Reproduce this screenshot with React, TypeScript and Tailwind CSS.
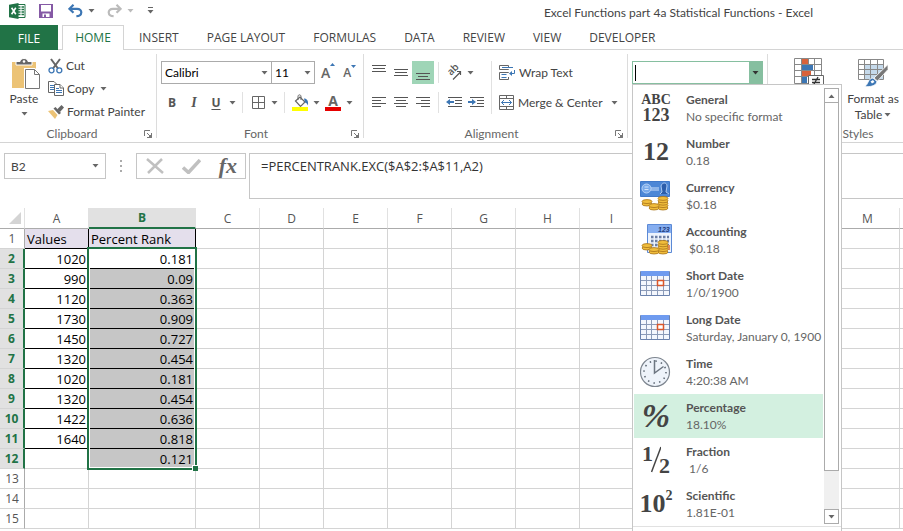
import type { ReactNode } from 'react';

const tabs = ['INSERT', 'PAGE LAYOUT', 'FORMULAS', 'DATA', 'REVIEW', 'VIEW', 'DEVELOPER'];

const columns = ['A', 'B', 'C', 'D', 'E', 'F', 'G', 'H', 'I', 'J', 'K', 'L', 'M', 'N'];

const rows = [
  ['Values', 'Percent Rank'],
  ['1020', '0.181'],
  ['990', '0.09'],
  ['1120', '0.363'],
  ['1730', '0.909'],
  ['1450', '0.727'],
  ['1320', '0.454'],
  ['1020', '0.181'],
  ['1320', '0.454'],
  ['1422', '0.636'],
  ['1640', '0.818'],
  ['', '0.121'],
  ['', ''],
  ['', ''],
  ['', ''],
];

const Caret = ({ className = 'text-[#666]' }: { className?: string }) => (
  <svg width="7" height="4" viewBox="0 0 7 4" className={`shrink-0 ${className}`} aria-hidden="true">
    <path d="M0.5 0h6L3.5 3.6z" fill="currentColor" />
  </svg>
);

const CaretButton = ({ label }: { label: string }) => (
  <button aria-label={label} className="flex h-[22px] w-[11px] items-center justify-center">
    <Caret />
  </button>
);

const IconButton = ({ label, active, children }: { label: string; active?: boolean; children: ReactNode }) => (
  <button
    aria-label={label}
    className={`flex h-[23px] w-[22px] items-center justify-center ${active ? 'bg-[#9fd5b7]' : ''}`}
  >
    {children}
  </button>
);

const Separator = () => <div className="mx-1 h-[21px] w-px bg-[#e1e1e1]" />;

// Horizontal strokes given as [x, y, width]
const Lines = ({ lines, children }: { lines: number[][]; children?: ReactNode }) => (
  <svg width="16" height="16" viewBox="0 0 16 16" shapeRendering="crispEdges" aria-hidden="true">
    {lines.map(([x, y, w]) => (
      <rect key={`${x}-${y}`} x={x} y={y} width={w} height="1" fill="#555" />
    ))}
    {children}
  </svg>
);

const Group = ({ name, className, launcher = true, children }: { name: string; className: string; launcher?: boolean; children: ReactNode }) => (
  <section aria-label={name} className={`flex shrink-0 flex-col ${className}`}>
    <div className="flex-1">{children}</div>
    <div className="flex h-4 items-center pr-1">
      <span className="flex-1 text-center text-[#666]">{name}</span>
      {launcher && (
        <button aria-label={`${name} settings`}>
          <svg width="8" height="8" viewBox="0 0 8 8" fill="none" stroke="#777" aria-hidden="true">
            <path d="M0.5 6V0.5H6M3 3l3.5 3.5M7.5 3v4.5H3" />
            <path d="M7.5 4.5v3h-3z" fill="#777" />
          </svg>
        </button>
      )}
    </div>
  </section>
);

const GroupDivider = () => <div className="mb-1 w-px shrink-0 bg-[#dcdcdc]" />;

const ExcelLogo = () => (
  <svg width="17" height="16" viewBox="0 0 17 16" aria-hidden="true">
    <path d="M8 1.5h8v13H8z" fill="#fff" stroke="#217346" />
    <path d="M9 4h2.5M12.5 4H15M9 6.5h2.5M12.5 6.5H15M9 9h2.5M12.5 9H15M9 11.5h2.5M12.5 11.5H15" stroke="#217346" strokeWidth="1.4" />
    <path d="M0 1.8L9.5 0v16L0 14.2z" fill="#217346" />
    <path d="M2.6 4.8l4.2 6.4M6.8 4.8l-4.2 6.4" stroke="#fff" strokeWidth="1.6" />
  </svg>
);

const SaveIcon = () => (
  <svg width="14" height="14" viewBox="0 0 14 14" aria-hidden="true">
    <path d="M0 0h14v14H0z" fill="#8559a5" />
    <path d="M2 1h10v6.5H2zM3.5 9.5h7V13h-7z" fill="#fff" />
    <path d="M5 10.5h2V13H5z" fill="#8559a5" />
  </svg>
);

const UndoIcon = () => (
  <svg width="15" height="14" viewBox="0 0 15 14" fill="none" stroke="currentColor" strokeWidth="2.2" aria-hidden="true">
    <path d="M5.5 0.8L1.4 4.8l4.1 4M1.8 4.8h7.2c6 0 5.6 7.4-0.6 7.4" />
  </svg>
);

const PasteIcon = () => (
  <svg width="30" height="32" viewBox="0 0 30 32" aria-hidden="true">
    <path d="M1 4h24v26H1z" fill="#ecc376" />
    <path d="M5 7V3.5h4C9.500-0.500 16.500-0.500 17 3.500h4V7z" fill="#666" stroke="#fff" />
    <circle cx="13" cy="3.5" r="1.3" fill="#fff" />
    <path d="M13 10h11l6 6v16H13z" fill="#fff" />
    <path d="M14.5 11.5h9l5 5v14h-14z" fill="#fff" stroke="#777" />
    <path d="M23.5 11.5v5h5" fill="none" stroke="#777" />
  </svg>
);

const CutIcon = () => (
  <svg width="15" height="16" viewBox="0 0 15 16" fill="none" aria-hidden="true">
    <path d="M3 1l7 9.5M12 1L5 10.5" stroke="#666" strokeWidth="2" />
    <circle cx="3.5" cy="12.3" r="2.5" stroke="#3c76b4" strokeWidth="1.3" />
    <circle cx="11.3" cy="12.3" r="2.5" stroke="#3c76b4" strokeWidth="1.3" />
  </svg>
);

const CopyIcon = () => (
  <svg width="16" height="15" viewBox="0 0 16 15" fill="#fff" stroke="#666" aria-hidden="true">
    <path d="M0.5 0.5H6L8.5 3v8.5h-8z" />
    <path d="M2 4.5h4M2 6.5h4M2 8.5h4" stroke="#3c76b4" />
    <path d="M6.5 3.5H12L15.5 7v7.5h-9z" />
    <path d="M12 3.5V7h3.5" />
    <path d="M8 7.5h3M8 9.5h6M8 11.5h6" stroke="#3c76b4" />
  </svg>
);

const PainterIcon = () => (
  <svg width="16" height="14" viewBox="0 0 16 14" aria-hidden="true">
    <path d="M0 6l5-1 4.500 5L7 14z" fill="#ecc376" />
    <path d="M5.500 3.500l2-1.500 5.500 6-2 1.500z" fill="#666" />
    <path d="M9 4.500l4.500-4.500L16 2.500 12 7z" fill="#666" />
  </svg>
);

const BucketIcon = () => (
  <svg width="17" height="17" viewBox="0 0 17 17" fill="none" aria-hidden="true">
    <path d="M3.5 7L8 3l5 5-4.5 4.5z" fill="#fff" stroke="#666" strokeWidth="1.2" />
    <path d="M6 6V2.5c0-2.2 3-2.2 3 0V6" stroke="#666" />
    <path d="M12 4.5c3 0 4.5 2 4 7-1-2-2-3-3-3z" fill="#3c76b4" />
    <path d="M0 13h16v4H0z" fill="#ffff00" />
  </svg>
);

const ConditionalIcon = () => (
  <svg width="32" height="32" viewBox="0 0 32 32" aria-hidden="true">
    <path d="M0.5 0.5h27v25h-27z" fill="#fff" />
    <path d="M8 1h6v5H8z" fill="#d9623b" />
    <path d="M8 7h11v5H8z" fill="#3c76b4" />
    <path d="M8 13h9v5H8z" fill="#d9623b" />
    <path d="M8 19h5v6H8z" fill="#3c76b4" />
    <path d="M0.5 0.5h27v25h-27zM0 6.5h28M0 12.5h28M0 18.5h28M7.5 0v25M14.5 0v6M20.5 0v25" fill="none" stroke="#888" />
    <path d="M14.5 17.5h15v13h-15z" fill="#fff" stroke="#666" />
    <path d="M18 21.5h8M18 24.5h8M24 19l-4.5 8" stroke="#333" strokeWidth="1.3" />
  </svg>
);

const FormatTableIcon = () => (
  <svg width="32" height="30" viewBox="0 0 32 30" aria-hidden="true">
    <path d="M1.5 1.5h25v20h-25z" fill="#fff" />
    <path d="M8 7h18v14H8z" fill="#c5d9ea" />
    <path d="M1.5 1.5h25v20h-25zM1 6.5h26M1 11.5h26M1 16.5h26M7.5 1v21M13.5 1v21M20.5 1v21" fill="none" stroke="#888" />
    <path d="M31 6.5v5L20.5 23l-3.5-3z" fill="#777" stroke="#fff" strokeWidth="0.8" />
    <path d="M16 20l4 3.5c-1 5-8 5.5-12.5 5 4-1.5 3-8 8.5-8.5z" fill="#3c76b4" stroke="#fff" strokeWidth="0.8" />
    <path d="M13.5 23.5l2.5-1.5 1.5 2-2.5 1.5z" fill="#fff" />
  </svg>
);

const coinStacks = [
  [23, 28, 5],
  [7, 24, 2],
  [14, 28, 2],
];

// Each stack is [x, y of the lowest coin, number of coins]
const Coins = () => (
  <g fill="#f0bd3c" stroke="#a8741a" strokeWidth="0.8">
    {coinStacks.map(([x, y, count]) =>
      Array.from({ length: count }, (_, i) => <ellipse key={`${x}-${i}`} cx={x} cy={y - i * 2.4} rx="5" ry="2" />)
    )}
  </g>
);

const CurrencyIcon = () => (
  <svg width="32" height="32" viewBox="0 0 32 32" aria-hidden="true">
    <path d="M0.5 1.5h29v15h-29z" fill="#4c87d6" stroke="#3f78c8" />
    <circle cx="6.5" cy="8.5" r="4.5" fill="#79aaea" stroke="#b6d2f7" />
    <path d="M4.5 7h4M4.5 9.5h4M11 8h8M11 10h8" stroke="#cfe2fb" />
    <path d="M20 14l2-2-1-6c1-4 6-4 6 0l-1 6 3 2" fill="#2c5eaa" stroke="#a9c9f4" />
    <Coins />
  </svg>
);

const AccountingIcon = () => (
  <svg width="32" height="32" viewBox="0 0 32 32" aria-hidden="true">
    <path d="M7.5 0.5h24v28h-24z" fill="#edf3fc" stroke="#5c8ad6" />
    <path d="M8 1h23v8H8z" fill="#86aef0" />
    <text x="18" y="8" fontFamily="Liberation Sans" fontSize="7" fontWeight="bold" fontStyle="italic" fill="#1f3d7d">123</text>
    <path d="M11 13h18M11 17h18M11 21h18" stroke="#6c7fa5" strokeWidth="2.5" strokeDasharray="2.5 1.5" />
    <path d="M27 21h3v5h-3z" fill="#e08a60" />
    <Coins />
  </svg>
);

const CalendarIcon = () => (
  <svg width="32" height="28" viewBox="0 0 32 28" aria-hidden="true">
    <path d="M0.5 1.5h29v24h-29z" fill="#f4f7fd" stroke="#6b82ad" />
    <path d="M1 1h28v5H1z" fill="#6f9bef" />
    <path d="M1 10.5h28M1 15.5h28M1 20.5h28M6.5 6v19M11.5 6v19M17.5 6v19M23.5 6v19" stroke="#8c9bb8" />
    <path d="M17.5 10.5h6v5h-6z" fill="#fff" stroke="#d9562b" strokeWidth="1.5" />
  </svg>
);

const ClockIcon = () => (
  <svg width="32" height="32" viewBox="0 0 32 32" aria-hidden="true">
    <circle cx="15" cy="16" r="14.5" fill="#eef3fa" stroke="#7d858f" strokeWidth="1.2" />
    <circle cx="15" cy="16" r="11" fill="none" stroke="#59636f" strokeWidth="1.5" strokeDasharray="1.5 4.26" />
    <path d="M14.5 4v13l9-6.5" fill="none" stroke="#6d7681" strokeWidth="1.5" />
  </svg>
);

const glyph = "font-['Liberation_Serif',serif] font-bold text-[#444]";

const formats = [
  {
    name: 'General',
    sample: 'No specific format',
    icon: (
      <span className={`${glyph} flex flex-col text-center text-sm leading-[14px]`}>
        <span>ABC</span>
        <span className="text-lg leading-4">123</span>
      </span>
    ),
  },
  { name: 'Number', sample: '0.18', icon: <span className={`${glyph} text-[26px]`}>12</span> },
  { name: 'Currency', sample: '$0.18', icon: <CurrencyIcon /> },
  { name: 'Accounting', sample: ' $0.18', icon: <AccountingIcon /> },
  { name: 'Short Date', sample: '1/0/1900', icon: <CalendarIcon /> },
  { name: 'Long Date', sample: 'Saturday, January 0, 1900', icon: <CalendarIcon /> },
  { name: 'Time', sample: '4:20:38 AM', icon: <ClockIcon /> },
  { name: 'Percentage', sample: '18.10%', icon: <span className={`${glyph} text-[34px]`}><i>%</i></span> },
  {
    name: 'Fraction',
    sample: ' 1/6',
    icon: (
      <span className={`${glyph} flex text-[22px] leading-6`}>
        <span className="pb-3">1</span>
        <svg width="10" height="30" viewBox="0 0 10 30" className="-mx-0.5 self-center" aria-hidden="true">
          <path d="M10 2L0.5 27" stroke="#444" strokeWidth="1.5" />
        </svg>
        <span className="pt-3">2</span>
      </span>
    ),
  },
  {
    name: 'Scientific',
    sample: '1.81E-01',
    icon: (
      <span className={`${glyph} flex text-[26px]`}>
        10<span className="pb-4 text-sm leading-4">2</span>
      </span>
    ),
  },
];

const FormatMenu = () => (
  <div className="absolute top-[22px] -left-px z-10 flex h-[460px] w-[210px] flex-col border border-[#c6c6c6] bg-white">
    <div className="flex h-[442px] shrink-0 border-b border-[#e1e1e1] pt-px">
      <div role="listbox" aria-label="Number formats" className="ml-px w-[189px]">
        {formats.map(({ name, sample, icon }) => (
          <button
            key={name}
            role="option"
            aria-selected={name === 'Percentage'}
            className={`flex h-11 w-full items-center text-left ${name === 'Percentage' ? 'bg-[#d3f0e0]' : ''}`}
          >
            <span className="flex w-[44px] shrink-0 items-center justify-center leading-8">{icon}</span>
            <span className="pl-2 leading-[17px] whitespace-pre text-[#666]">
              <strong className="block text-[#555]">{name}</strong>
              {sample}
            </span>
          </button>
        ))}
      </div>
      <div className="my-0.5 ml-px flex w-[15px] flex-col bg-[#f0f0f0]">
        <button aria-label="Scroll up" className="flex h-[15px] items-center justify-center border border-[#ababab] bg-white">
          <Caret className="rotate-180 text-[#666]" />
        </button>
        <div className="h-[368px] border border-t-0 border-[#ababab] bg-white" />
        <button aria-label="Scroll down" className="mt-auto flex h-[15px] items-center justify-center border border-[#ababab] bg-white">
          <Caret />
        </button>
      </div>
    </div>
  </div>
);

const TitleBar = () => (
  <header className="flex h-[25px] shrink-0 items-center pr-[90px] pb-1 pl-[9px]">
    <ExcelLogo />
    <button aria-label="Save" className="ml-[13px]"><SaveIcon /></button>
    <button aria-label="Undo" className="ml-[15px] text-[#3c76b4]"><UndoIcon /></button>
    <span className="ml-[5px]"><Caret /></span>
    <button aria-label="Redo" className="ml-[12px] -scale-x-100 text-[#bbb]"><UndoIcon /></button>
    <span className="ml-[5px]"><Caret className="text-[#bbb]" /></span>
    <button aria-label="Customize toolbar" className="ml-[13px] flex flex-col items-center gap-0.5">
      <span className="h-px w-[5px] bg-[#666]" />
      <Caret />
    </button>
    <h1 className="ml-auto pt-1 text-[#444]">Excel Functions part 4a Statistical Functions - Excel</h1>
  </header>
);

const TabStrip = () => (
  <nav className="flex h-[25px] shrink-0 items-stretch font-['Open_Sans',sans-serif] text-[#444]">
    <button className="w-[58px] bg-[#217346] pt-0.5 text-white">FILE</button>
    <span className="w-1 border-b border-[#d4d4d4]" />
    <button className="w-[62px] border border-b-0 border-[#d4d4d4] text-[#217346]">HOME</button>
    <div className="flex flex-1 gap-7 border-b border-[#d4d4d4] pl-[15px]">
      {tabs.map((tab) => (
        <button key={tab} className="pt-0.5 whitespace-nowrap">{tab}</button>
      ))}
    </div>
  </nav>
);

const ClipboardGroup = () => (
  <Group name="Clipboard" className="w-[156px]">
    <div className="flex">
      <button className="flex w-12 flex-col items-center pt-1">
        <span className="pl-1"><PasteIcon /></span>
        <span className="leading-[18px]">Paste</span>
        <span className="pt-1"><Caret /></span>
      </button>
      <div className="flex flex-col">
        <button className="flex h-[23px] items-center gap-[3px]"><CutIcon />Cut</button>
        <div className="flex h-[23px] items-center">
          <button className="flex items-center gap-[3px]"><CopyIcon />Copy</button>
          <span className="pl-1"><CaretButton label="Copy options" /></span>
        </div>
        <button className="flex h-[23px] items-center gap-[3px]"><PainterIcon />Format Painter</button>
      </div>
    </div>
  </Group>
);

const combo = 'h-[23px] w-full appearance-none border border-[#ababab] bg-white pl-[3px] text-black outline-none';

const FontGroup = () => (
  <Group name="Font" className="w-[206px] pl-1">
    <div className="flex items-center pt-[7px]">
      <label className="relative w-[111px]">
        <select aria-label="Font" className={combo}>
          <option>Calibri</option>
        </select>
        <span className="pointer-events-none absolute top-[10px] right-1"><Caret /></span>
      </label>
      <label className="relative -ml-px w-11">
        <select aria-label="Font size" className={combo}>
          <option>11</option>
        </select>
        <span className="pointer-events-none absolute top-[10px] right-1"><Caret /></span>
      </label>
      <button aria-label="Increase font size" className="ml-1.5 flex font-['Open_Sans',sans-serif] text-sm font-semibold text-[#666]">
        A
        <svg width="5" height="3" viewBox="0 0 5 3" aria-hidden="true"><path d="M2.5 0L5 3H0z" fill="#3c76b4" /></svg>
      </button>
      <button aria-label="Decrease font size" className="ml-2 flex font-['Open_Sans',sans-serif] text-xs font-semibold text-[#666]">
        A
        <svg width="5" height="3" viewBox="0 0 5 3" aria-hidden="true"><path d="M0 0h5L2.5 3z" fill="#3c76b4" /></svg>
      </button>
    </div>
    <div className="flex items-center pt-[7px] font-['Open_Sans',sans-serif] text-[#555]">
      <IconButton label="Bold"><b>B</b></IconButton>
      <IconButton label="Italic"><b className="font-['Liberation_Serif',serif] text-sm italic">I</b></IconButton>
      <IconButton label="Underline"><b className="underline underline-offset-2">U</b></IconButton>
      <CaretButton label="Underline style" />
      <Separator />
      <IconButton label="Borders">
        <svg width="13" height="13" viewBox="0 0 13 13" fill="none" stroke="#666" aria-hidden="true">
          <path d="M0.5 0.5h12v12h-12zM6.5 0v13M0 6.5h13" />
        </svg>
      </IconButton>
      <CaretButton label="Border style" />
      <Separator />
      <IconButton label="Fill color"><BucketIcon /></IconButton>
      <CaretButton label="Fill color options" />
      <IconButton label="Font color">
        <span className="flex w-4 flex-col items-center border-b-4 border-[#e60000] text-sm leading-[13px] font-bold text-[#666]">A</span>
      </IconButton>
      <CaretButton label="Font color options" />
    </div>
  </Group>
);

const AlignmentGroup = () => (
  <Group name="Alignment" className="w-[263px] pl-1">
    <div className="flex pt-[7px]">
      <div className="flex flex-col gap-[7px]">
        <div className="flex items-center">
          <IconButton label="Top align"><Lines lines={[[1, 0, 14], [2, 3, 12], [1, 6, 14]]} /></IconButton>
          <IconButton label="Middle align"><Lines lines={[[1, 4, 14], [2, 7, 12], [1, 10, 14]]} /></IconButton>
          <IconButton label="Bottom align" active><Lines lines={[[1, 8, 14], [3, 11, 10], [1, 14, 14]]} /></IconButton>
          <Separator />
          <IconButton label="Orientation">
            <svg width="22" height="22" viewBox="0 0 22 22" className="overflow-visible" aria-hidden="true">
              <text transform="translate(8 14) rotate(-45)" fontFamily="Open Sans" fontSize="10" fontWeight="600" fill="#555">ab</text>
              <path d="M10 17.5l7.5-7.5M17.5 13V9.500H14" fill="none" stroke="#555" strokeWidth="1.2" />
            </svg>
          </IconButton>
          <CaretButton label="Orientation options" />
        </div>
        <div className="flex items-center">
          <IconButton label="Align left"><Lines lines={[[1, 2, 14], [1, 5, 9], [1, 8, 14], [1, 11, 9]]} /></IconButton>
          <IconButton label="Center"><Lines lines={[[1, 2, 14], [3, 5, 10], [1, 8, 14], [3, 11, 10]]} /></IconButton>
          <IconButton label="Align right"><Lines lines={[[1, 2, 14], [6, 5, 9], [1, 8, 14], [6, 11, 9]]} /></IconButton>
          <Separator />
          <IconButton label="Decrease indent">
            <Lines lines={[[2, 2, 14], [9, 5, 7], [9, 8, 7], [2, 11, 14]]}>
              <path d="M0 7l4-3v2h4v2H4v2z" fill="#3c76b4" shapeRendering="auto" />
            </Lines>
          </IconButton>
          <IconButton label="Increase indent">
            <Lines lines={[[2, 2, 14], [9, 5, 7], [9, 8, 7], [2, 11, 14]]}>
              <path d="M8 7L4 4v2H0v2h4v2z" fill="#3c76b4" shapeRendering="auto" />
            </Lines>
          </IconButton>
        </div>
      </div>
      <div className="ml-1 flex flex-col gap-[7px] border-l border-[#e1e1e1] pl-[7px]">
        <button className="flex h-[23px] items-center gap-1">
          <svg width="16" height="16" viewBox="0 0 16 16" fill="none" stroke="#666" aria-hidden="true">
            <path d="M9.5 2V0.5h-9v4h9V4M9.5 8V7.5h-9v7h9V12" />
            <path d="M3 2.5h11M2.5 9.5h5M2.5 12.5h5M15.5 5v3.5H12" stroke="#3c76b4" />
            <path d="M10 8.5l3-2.5v5z" fill="#3c76b4" stroke="none" />
          </svg>
          Wrap Text
        </button>
        <div className="flex items-center">
          <button className="flex h-[23px] items-center gap-1 whitespace-nowrap">
            <svg width="15" height="15" viewBox="0 0 15 15" fill="none" stroke="#666" aria-hidden="true">
              <path d="M0.5 0.5h14v14h-14zM0 3.5h15M0 11.5h15M7.5 0v3.5M7.5 11.5V15" />
              <path d="M2.5 7.5h10M5 5L2.5 7.5 5 10M10 5l2.5 2.5L10 10" stroke="#3c76b4" />
            </svg>
            Merge &amp; Center
          </button>
          <span className="pl-1.5"><CaretButton label="Merge options" /></span>
        </div>
      </div>
    </div>
  </Group>
);

const Ribbon = () => (
  <div className="flex h-[93px] shrink-0 border-b border-[#d4d4d4] pt-1 text-[#444]">
    <ClipboardGroup />
    <GroupDivider />
    <FontGroup />
    <GroupDivider />
    <AlignmentGroup />
    <GroupDivider />
    <Group name="" className="w-[139px] pl-1" launcher={false}>
      <div className="pt-[7px]">
        <div className="relative flex h-[23px] w-[131px] border border-[#86bfa0]">
          <input aria-label="Number format" className="w-0 flex-1 bg-white outline-none" />
          <span className="absolute top-[3px] left-0.5 h-4 w-px bg-black" />
          <button aria-label="Open number formats" className="flex w-[13px] items-center justify-center bg-[#86bfa0]">
            <Caret className="text-[#333]" />
          </button>
          <FormatMenu />
        </div>
      </div>
    </Group>
    <GroupDivider />
    <Group name="Styles" className="w-[184px]" launcher={false}>
      <div className="flex pt-1">
        <button aria-label="Conditional formatting" className="flex w-[72px] justify-end pr-[14px]"><ConditionalIcon /></button>
        <button className="flex w-[66px] flex-col items-center leading-4 whitespace-nowrap">
          <FormatTableIcon />
          <span className="pt-[3px]">Format as</span>
          <span className="flex items-center gap-0.5">Table <Caret /></span>
        </button>
      </div>
    </Group>
  </div>
);

const FormulaBar = () => (
  <div className="flex shrink-0 items-start pt-[10px] pb-[9px] pl-1">
    <div className="relative w-[102px]">
      <input aria-label="Name box" defaultValue="B2" className="h-[26px] w-full border border-[#c6c6c6] pl-1.5 text-[#444]" />
      <span className="absolute top-[11px] right-[7px]"><Caret /></span>
    </div>
    <div className="flex h-[26px] w-[30px] flex-col items-center justify-center gap-[3px]">
      <span className="size-0.5 bg-[#ababab]" />
      <span className="size-0.5 bg-[#ababab]" />
      <span className="size-0.5 bg-[#ababab]" />
    </div>
    <div className="flex h-[26px] w-[110px] items-center justify-between border border-[#c6c6c6] pr-2 pl-[9px]">
      <button aria-label="Cancel">
        <svg width="18" height="16" viewBox="0 0 18 16" aria-hidden="true">
          <path d="M1 1l16 14M16 1L2 15" stroke="#c0c0c0" strokeWidth="2.5" />
        </svg>
      </button>
      <button aria-label="Enter">
        <svg width="19" height="15" viewBox="0 0 19 15" aria-hidden="true">
          <path d="M1 8.5l5.5 5L18 1" fill="none" stroke="#c0c0c0" strokeWidth="3.5" />
        </svg>
      </button>
      <button aria-label="Insert function" className="font-['Liberation_Serif',serif] text-[22px] leading-6 font-bold text-[#666] italic">
        fx
      </button>
    </div>
    <textarea
      aria-label="Formula"
      defaultValue="=PERCENTRANK.EXC($A$2:$A$11,A2)"
      className="ml-[3px] h-[46px] flex-1 resize-none border border-r-0 border-[#c6c6c6] pt-1 pl-[11px] font-['Open_Sans',sans-serif] text-[13px] leading-4 text-[#333] outline-none"
    />
  </div>
);

const cellClass = (row: number, col: number) => {
  if (col > 1 || row > 11) return 'border-[#d4d4d4]';
  if (row === 0) return 'border-black bg-[#e4dfec] pl-0.5 text-left';
  if (col === 1) return `border-black text-right ${row > 1 ? 'bg-[#c6c6c6]' : ''}`;
  return row === 11 ? 'border-[#d4d4d4]' : 'border-black text-right';
};

const Sheet = () => (
  <div className="relative min-h-0 flex-1 overflow-hidden font-['Open_Sans',sans-serif]">
    <table className="w-[964px] table-fixed border-separate border-spacing-0">
      <colgroup>
        <col className="w-[25px]" />
        <col className="w-16" />
        <col className="w-[107px]" />
        {columns.slice(2).map((c) => (
          <col key={c} className="w-16" />
        ))}
      </colgroup>
      <thead>
        <tr className="h-[21px] text-[#555]">
          <th className="border-r border-b border-[#ababab] border-r-[#e1e1e1] p-0">
            <svg width="12" height="12" viewBox="0 0 12 12" className="ml-[9px]" aria-hidden="true"><path d="M12 0v12H0z" fill="#d4d4d4" /></svg>
          </th>
          {columns.map((c) => (
            <th
              key={c}
              className={`border-r border-[#ababab] border-r-[#e1e1e1] p-0 leading-[18px] ${
                c === 'B' ? 'border-b-2 border-b-[#217346] bg-[#e1e1e1] pt-px font-bold text-[#217346]' : 'border-b pt-0.5 font-normal'
              }`}
            >
              {c}
            </th>
          ))}
        </tr>
      </thead>
      <tbody>
        {rows.map((row, r) => (
          <tr key={r} className="h-5 text-[13px] leading-[18px]">
            <th
              className={`border-b border-b-[#d4d4d4] p-0 text-center text-xs leading-[18px] ${
                r > 0 && r < 12
                  ? 'border-r-2 border-r-[#217346] bg-[#e1e1e1] font-bold text-[#217346]'
                  : 'border-r border-r-[#ababab] font-normal text-[#555]'
              }`}
            >
              {r + 1}
            </th>
            {columns.map((c, i) => (
              <td key={c} className={`border-r border-b p-0 pr-0.5 whitespace-nowrap text-black ${cellClass(r, i)}`}>
                {row[i]}
              </td>
            ))}
          </tr>
        ))}
      </tbody>
    </table>
    {/* Outline of the selected range with its fill handle */}
    <div className="pointer-events-none absolute top-[39px] left-[87px] h-[223px] w-[110px] border-2 border-[#217346] shadow-[inset_0_0_0_1px_#fff]">
      <span className="absolute -right-[3px] -bottom-[3px] size-[6px] border-t border-l border-white bg-[#217346]" />
    </div>
  </div>
);

const App = () => (
  <div className="flex h-screen flex-col overflow-hidden bg-white font-['Lato','Open_Sans',sans-serif] text-xs">
    <TitleBar />
    <TabStrip />
    <Ribbon />
    <FormulaBar />
    <Sheet />
  </div>
);

export default App;
